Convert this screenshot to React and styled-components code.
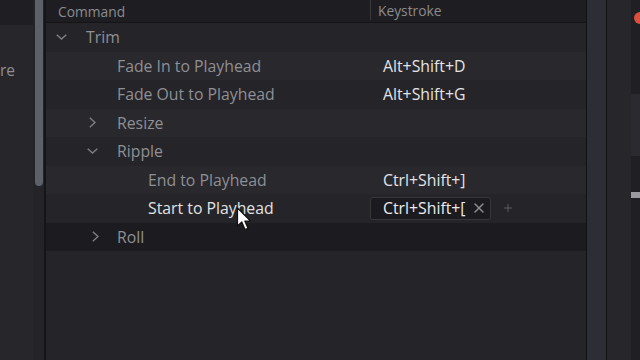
import React from "react";
import styled, { createGlobalStyle } from "styled-components";
import { X, Plus } from "lucide-react";

const Global = createGlobalStyle`
  *, *::before, *::after { box-sizing: border-box; }
  html, body { margin: 0; padding: 0; background: #26262b; }
  body { font-family: "Open Sans", "Noto Sans", sans-serif; overflow: hidden; }
`;

const Screen = styled.div`
  position: relative;
  display: flex;
  width: 640px;
  height: 360px;
  background: #26262b;
  overflow: hidden;
`;

const SidePanel = styled.div`
  width: 33px;
  flex: none;
  display: flex;
  flex-direction: column;
  background: #26262b;
  overflow: hidden;
`;

const SideHeader = styled.div`
  height: 25px;
  background: #1f1f23;
`;

const SideLabel = styled.div`
  margin-top: 34px;
  font-size: 15.5px;
  color: #8e8e93;
  white-space: nowrap;
`;

const ScrollTrack = styled.div`
  width: 11px;
  flex: none;
  background: #242428;
  display: flex;
  justify-content: center;
`;

const ScrollThumb = styled.div`
  width: 8px;
  height: 186px;
  border-radius: 0 0 4px 4px;
  background: #5c6068;
`;

const Divider = styled.div`
  width: ${(p) => p.w || 1}px;
  flex: none;
  background: ${(p) => p.c || "#121215"};
`;

const Main = styled.div`
  width: 540px;
  flex: none;
  display: flex;
  flex-direction: column;
  background: #252529;
`;

const Header = styled.div`
  height: 23px;
  display: flex;
  align-items: stretch;
  background: #1e1e22;
  border-bottom: 1px solid #141417;
  font-size: 13.8px;
  color: #8a8a90;
`;

const HeadCell = styled.div`
  display: flex;
  align-items: center;
  width: ${(p) => (p.w ? p.w + "px" : "auto")};
  flex: ${(p) => (p.w ? "none" : 1)};
  padding-left: ${(p) => p.pad}px;
  border-left: ${(p) => (p.sep ? "1px solid #38383d" : "none")};
  margin-bottom: ${(p) => (p.sep ? 2 : 0)}px;
`;

const Row = styled.div`
  height: 28.5px;
  display: flex;
  align-items: center;
  background: ${(p) => (p.hl ? "#1c1c20" : p.odd ? "#28282d" : "#252529")};
  font-size: 15.8px;
`;

const CommandCell = styled.div`
  width: 324px;
  flex: none;
  display: flex;
  align-items: center;
  padding-left: ${(p) => p.indent}px;
  color: ${(p) => (p.active ? "#e2e2e4" : "#8f8f94")};
  white-space: nowrap;
`;

const Toggle = styled.span`
  display: flex;
  align-items: center;
  width: 34px;
  padding-left: ${(p) => p.pad}px;
  color: #7c7c82;
`;

const KeyCell = styled.div`
  flex: 1;
  display: flex;
  align-items: center;
  color: #e4e4e6;
  padding-left: 13px;
  white-space: nowrap;
`;

const KeyEdit = styled.div`
  display: flex;
  align-items: center;
  height: 23px;
  width: 121px;
  margin-left: -13px;
  padding-left: 12px;
  background: #1b1b1f;
  border: 1px solid #35353a;
  border-radius: 3px;
  color: #ececee;
`;

const EditText = styled.span`
  flex: 1;
  white-space: nowrap;
  overflow: hidden;
`;

const ClearBtn = styled.span`
  display: flex;
  justify-content: center;
  flex: none;
  width: 22px;
  color: #8e8e93;
`;

const AddBtn = styled.span`
  display: flex;
  margin-left: 11px;
  color: #6e6e74;
`;

const Track = styled.div`
  width: 19px;
  flex: none;
  background: #2d2d35;
`;

const Panel = styled.div`
  width: 24px;
  flex: none;
  background: #26262b;
`;

const EdgePanel = styled.div`
  flex: 1;
  display: flex;
  flex-direction: column;
  background: #1f1f24;
`;

const EdgeDot = styled.div`
  margin: 12px 0 0 3px;
  width: 12px;
  height: 12px;
  border-radius: 50%;
  background: #d9503f;
`;

const EdgeBlock = styled.div`
  height: ${(p) => p.h}px;
  margin-top: ${(p) => p.mt}px;
  background: ${(p) => p.c};
`;

const Cursor = styled.svg`
  position: absolute;
  left: 236px;
  top: 207px;
`;

function Chevron({ open }) {
  return open ? (
    <svg width="11" height="6" viewBox="0 0 11 6">
      <path d="M0.7 0.7 L5.5 5 L10.3 0.7" fill="none" stroke="currentColor" strokeWidth="1.5" />
    </svg>
  ) : (
    <svg width="7" height="11" viewBox="0 0 7 11">
      <path d="M0.8 0.7 L6 5.5 L0.8 10.3" fill="none" stroke="currentColor" strokeWidth="1.5" />
    </svg>
  );
}

const rows = [
  { label: "Trim", level: 0, open: true },
  { label: "Fade In to Playhead", level: 1, key: "Alt+Shift+D" },
  { label: "Fade Out to Playhead", level: 1, key: "Alt+Shift+G" },
  { label: "Resize", level: 1, open: false },
  { label: "Ripple", level: 1, open: true },
  { label: "End to Playhead", level: 2, key: "Ctrl+Shift+]" },
  { label: "Start to Playhead", level: 2, key: "Ctrl+Shift+[", editing: true },
  { label: "Roll", level: 1, open: false, hl: true },
];

function CommandRow({ r, i }) {
  const group = r.open !== undefined;
  const indent = group ? 6 + r.level * 31 : 71 + (r.level - 1) * 31;
  return (
    <Row odd={i % 2 === 1} hl={r.hl}>
      <CommandCell indent={indent} active={r.editing}>
        {group && (
          <Toggle pad={r.open ? 4 : r.hl ? 9 : 6}>
            <Chevron open={r.open} />
          </Toggle>
        )}
        {r.label}
      </CommandCell>
      <KeyCell>
        {r.editing ? (
          <>
            <KeyEdit>
              <EditText>{r.key}</EditText>
              <ClearBtn>
                <X size={16} strokeWidth={2} />
              </ClearBtn>
            </KeyEdit>
            <AddBtn>
              <Plus size={12} strokeWidth={1.5} />
            </AddBtn>
          </>
        ) : (
          r.key
        )}
      </KeyCell>
    </Row>
  );
}

export default function App() {
  return (
    <Screen>
      <Global />
      <SidePanel>
        <SideHeader />
        <SideLabel>re</SideLabel>
      </SidePanel>
      <ScrollTrack>
        <ScrollThumb />
      </ScrollTrack>
      <Divider w={2} c="#151518" />
      <Main>
        <Header>
          <HeadCell w={324} pad={12}>Command</HeadCell>
          <HeadCell sep pad={7}>Keystroke</HeadCell>
        </Header>
        {rows.map((r, i) => (
          <CommandRow key={r.label} r={r} i={i} />
        ))}
      </Main>
      <Divider c="#111114" />
      <Track />
      <Divider c="#111114" />
      <Panel />
      <EdgePanel>
        <EdgeDot />
        <EdgeBlock mt={70} h={62} c="#2a2a30" />
        <EdgeBlock mt={36} h={6} c="#9a9aa0" />
      </EdgePanel>
      <Cursor width="16" height="25" viewBox="0 0 16 25">
        <path d="M1.5 1 L1.5 19 L5.8 15 L9 22.5 L12 21.3 L8.8 14 L14.5 14 Z" fill="#fff" stroke="#111" strokeWidth="1.2" strokeLinejoin="round" />
      </Cursor>
    </Screen>
  );
}
